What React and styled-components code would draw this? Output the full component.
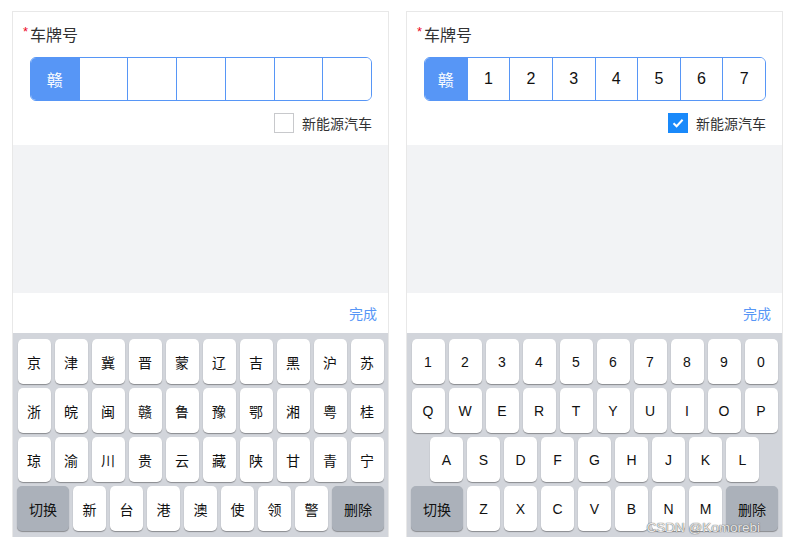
import React from "react";
import styled, { createGlobalStyle } from "styled-components";

const GlobalStyle = createGlobalStyle`
  body {
    margin: 0;
    background: #fff;
    font-family: "Liberation Sans", "Noto Sans CJK SC", sans-serif;
  }
`;

const Page = styled.div`
  display: flex;
  gap: 17px;
  padding: 11px 0 0 12px;
`;

const Panel = styled.div`
  position: relative;
  width: 375px;
  border: 1px solid #e8e8e8;
  border-bottom: none;
  background: #fff;
  display: flex;
  flex-direction: column;
`;

const FormSection = styled.div`
  padding: 13px 16px 12px 17px;
`;

const Label = styled.div`
  position: relative;
  font-size: 16px;
  line-height: 22px;
  color: #323233;

  &::before {
    content: "*";
    position: absolute;
    left: -7px;
    top: -4px;
    color: #ee0a24;
    font-size: 13px;
  }
`;

const PlateBox = styled.div`
  margin-top: 10px;
  height: 44px;
  box-sizing: border-box;
  display: flex;
  border: 1px solid #5796f6;
  border-radius: 6px;
  overflow: hidden;
`;

const PlateCell = styled.div`
  flex: 1;
  display: flex;
  align-items: center;
  justify-content: center;
  font-size: 16px;
  color: ${(p) => (p.$active ? "#fff" : "#111")};
  background: ${(p) => (p.$active ? "#5796f6" : "#fff")};
  & + & {
    border-left: 1px solid #5796f6;
  }
`;

const CheckRow = styled.div`
  margin-top: 12px;
  display: flex;
  justify-content: flex-end;
  align-items: center;
  gap: 8px;
  font-size: 14px;
  color: #323233;
  height: 20px;
`;

const CheckBox = styled.span`
  width: 20px;
  height: 20px;
  box-sizing: border-box;
  border: 1px solid ${(p) => (p.$checked ? "#1989fa" : "#c8c9cc")};
  background: ${(p) => (p.$checked ? "#1989fa" : "#fff")};
  display: flex;
  align-items: center;
  justify-content: center;
`;

const Blank = styled.div`
  height: 148px;
  background: #f2f3f5;
`;

const DoneBar = styled.div`
  height: 40px;
  display: flex;
  align-items: center;
  justify-content: flex-end;
  padding-right: 11px;
  font-size: 14px;
  color: #5796f6;
  background: #fff;
`;

const Keyboard = styled.div`
  background: #d2d5db;
  padding: 6px 0;
  display: flex;
  flex-direction: column;
  gap: 4px;
`;

const KeyRow = styled.div`
  display: flex;
  justify-content: center;
  gap: 4px;
`;

const Key = styled.div`
  width: ${(p) => (p.$wide ? "52px" : "33px")};
  height: 45px;
  border-radius: 5px;
  background: ${(p) => (p.$wide ? "#abb1ba" : "#fff")};
  box-shadow: 0 1px 1px rgba(0, 0, 0, 0.35);
  display: flex;
  align-items: center;
  justify-content: center;
  font-size: 14px;
  color: #111;
`;

const Watermark = styled.div`
  position: absolute;
  right: 22px;
  bottom: 2px;
  font-size: 13.5px;
  color: rgba(255, 255, 255, 0.85);
  text-shadow: 0 0 1px #666, 0 0 1px #666;
`;

const provinceRows = [
  ["京", "津", "冀", "晋", "蒙", "辽", "吉", "黑", "沪", "苏"],
  ["浙", "皖", "闽", "赣", "鲁", "豫", "鄂", "湘", "粤", "桂"],
  ["琼", "渝", "川", "贵", "云", "藏", "陕", "甘", "青", "宁"],
  ["新", "台", "港", "澳", "使", "领", "警"],
];

const letterRows = [
  ["1", "2", "3", "4", "5", "6", "7", "8", "9", "0"],
  ["Q", "W", "E", "R", "T", "Y", "U", "I", "O", "P"],
  ["A", "S", "D", "F", "G", "H", "J", "K", "L"],
  ["Z", "X", "C", "V", "B", "N", "M"],
];

function KeyboardPad({ rows }) {
  return (
    <Keyboard>
      {rows.slice(0, 3).map((row, i) => (
        <KeyRow key={i}>
          {row.map((k) => (
            <Key key={k}>{k}</Key>
          ))}
        </KeyRow>
      ))}
      <KeyRow>
        <Key $wide>切换</Key>
        {rows[3].map((k) => (
          <Key key={k}>{k}</Key>
        ))}
        <Key $wide>删除</Key>
      </KeyRow>
    </Keyboard>
  );
}

function PlatePanel({ cells, checked, rows, watermark }) {
  return (
    <Panel>
      <FormSection>
        <Label>车牌号</Label>
        <PlateBox>
          {cells.map((c, i) => (
            <PlateCell key={i} $active={i === 0}>
              {c}
            </PlateCell>
          ))}
        </PlateBox>
        <CheckRow>
          <CheckBox $checked={checked}>
            {checked && (
              <svg width="14" height="14" viewBox="0 0 14 14">
                <path
                  d="M2.5 7.2 L5.6 10.2 L11.6 3.8"
                  fill="none"
                  stroke="#fff"
                  strokeWidth="2"
                />
              </svg>
            )}
          </CheckBox>
          新能源汽车
        </CheckRow>
      </FormSection>
      <Blank />
      <DoneBar>完成</DoneBar>
      <KeyboardPad rows={rows} />
      {watermark && <Watermark>CSDN @Komorebi</Watermark>}
    </Panel>
  );
}

export default function App() {
  return (
    <>
      <GlobalStyle />
      <Page>
        <PlatePanel
          cells={["赣", "", "", "", "", "", ""]}
          checked={false}
          rows={provinceRows}
        />
        <PlatePanel
          cells={["赣", "1", "2", "3", "4", "5", "6", "7"]}
          checked
          rows={letterRows}
          watermark
        />
      </Page>
    </>
  );
}
